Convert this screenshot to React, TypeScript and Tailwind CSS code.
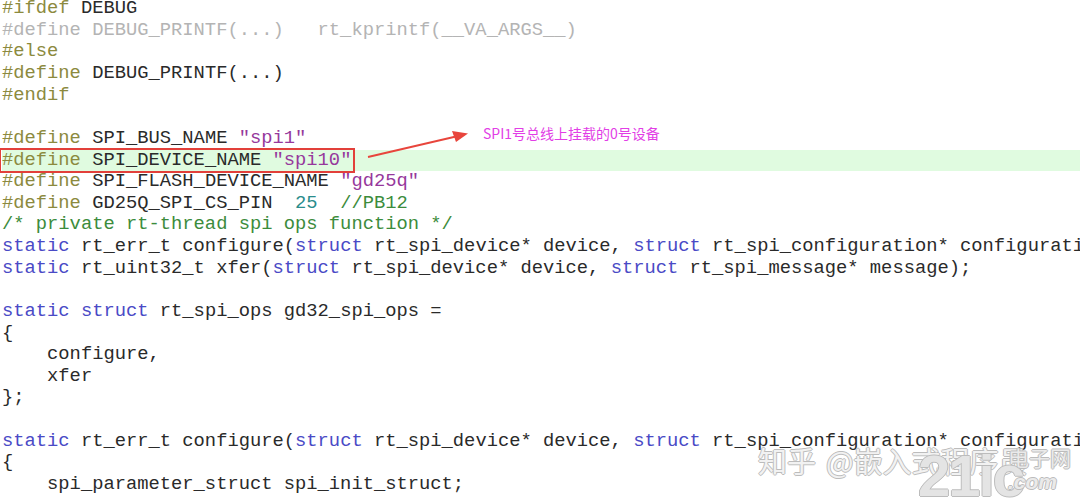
import React from 'react';

type Tok = [string, string?];

const C = {
  pp: 'text-[#8c8a3e]',
  kw: 'text-[#4a4ac6]',
  str: 'text-[#96389c]',
  num: 'text-[#2a8c8c]',
  cm: 'text-[#3c8c3c]',
  off: 'text-[#b4b4b4]',
};

const lines: Tok[][] = [
  [['#ifdef', C.pp], [' DEBUG']],
  [['#define DEBUG_PRINTF(...)   rt_kprintf(__VA_ARGS__)', C.off]],
  [['#else', C.pp]],
  [['#define', C.pp], [' DEBUG_PRINTF(...)']],
  [['#endif', C.pp]],
  [],
  [['#define', C.pp], [' SPI_BUS_NAME '], ['"spi1"', C.str]],
  [], // highlighted line, rendered separately
  [['#define', C.pp], [' SPI_FLASH_DEVICE_NAME '], ['"gd25q"', C.str]],
  [['#define', C.pp], [' GD25Q_SPI_CS_PIN  '], ['25', C.num], ['  '], ['//PB12', C.cm]],
  [['/* private rt-thread spi ops function */', C.cm]],
  [['static', C.kw], [' rt_err_t configure('], ['struct', C.kw], [' rt_spi_device* device, '], ['struct', C.kw], [' rt_spi_configuration* configuration);']],
  [['static', C.kw], [' rt_uint32_t xfer('], ['struct', C.kw], [' rt_spi_device* device, '], ['struct', C.kw], [' rt_spi_message* message);']],
  [],
  [['static', C.kw], [' '], ['struct', C.kw], [' rt_spi_ops gd32_spi_ops =']],
  [['{']],
  [['    configure,']],
  [['    xfer']],
  [['};']],
  [],
  [['static', C.kw], [' rt_err_t configure('], ['struct', C.kw], [' rt_spi_device* device, '], ['struct', C.kw], [' rt_spi_configuration* configuration)']],
  [['{']],
  [['    spi_parameter_struct spi_init_struct;']],
];

const outline =
  '[text-shadow:1px_0_0_#bcbcbc,-1px_0_0_#bcbcbc,0_1px_0_#bcbcbc,0_-1px_0_#bcbcbc]';

export default function App() {
  return (
    <div className="relative w-[1080px] h-[499px] overflow-hidden bg-white">
      {/* code listing */}
      <div className="flex flex-col -mt-[1.8px] pl-[2px] font-['Courier_New','Liberation_Mono',monospace] text-[18.8px] leading-[21.64px] text-[#2a2a2a] whitespace-pre">
        {lines.map((toks, i) =>
          i === 7 ? (
            <div key={i} className="h-[21.64px] bg-[#e0fbe0]">
              <span className="inline-block outline-2 outline-[#e2403a] pr-[2px] -ml-[1px] pl-[1px]">
                <span className={C.pp}>#define</span> SPI_DEVICE_NAME <span className={C.str}>"spi10"</span>
              </span>
            </div>
          ) : (
            <div key={i} className="h-[21.64px]">
              {toks.map(([t, cls], j) => (
                <span key={j} className={cls}>
                  {t}
                </span>
              ))}
            </div>
          )
        )}
      </div>

      {/* annotation arrow */}
      <svg className="absolute left-[364px] top-[126px]" width="110" height="40" viewBox="0 0 110 40">
        <line x1="4" y1="31" x2="92" y2="10.5" stroke="#e8453c" strokeWidth="1.8" />
        <polygon points="104,7.5 88,5 92,16" fill="#e8453c" />
      </svg>
      <div className="absolute left-[483px] top-[123px] font-['Noto_Sans_CJK_SC',sans-serif] text-[14px] leading-[20px] text-[#e23ee6]">
        SPI1号总线上挂载的0号设备
      </div>

      {/* watermark */}
      <div className={`absolute left-[758px] top-[442px] flex items-baseline gap-[10px] font-['Noto_Sans_CJK_SC',sans-serif] text-[29px] leading-[36px] text-white/80 ${outline}`}>
        <span>知乎</span>
        <span>@嵌入式程序员</span>
      </div>
      <div className={`absolute left-[918px] top-[447px] font-['Liberation_Sans',sans-serif] font-bold text-[58px] leading-[58px] tracking-[-2px] text-white/60 ${outline}`}>
        21ic
      </div>
      <div className={`absolute left-[1008px] top-[444px] flex flex-col items-start font-['Noto_Sans_CJK_SC',sans-serif] text-white/70 ${outline}`}>
        <span className="text-[21px] leading-[26px]">电子网</span>
        <span className="font-['Liberation_Sans',sans-serif] italic font-bold text-[21px] leading-[24px]">.com</span>
      </div>
    </div>
  );
}
